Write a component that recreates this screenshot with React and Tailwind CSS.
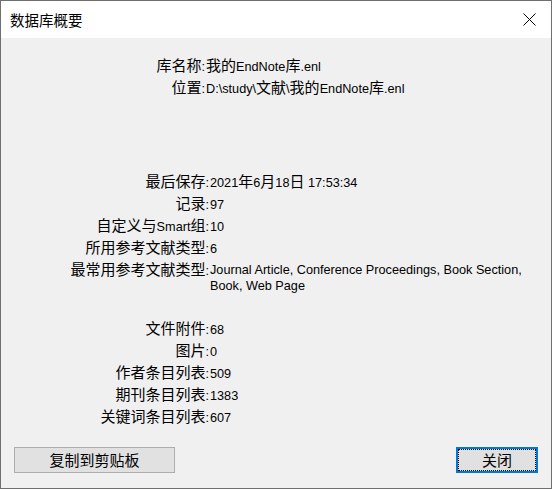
import React from "react";

const CJK = /[\u3000-\u9fff\uff00-\uffef]+|[^\u3000-\u9fff\uff00-\uffef]+/g;
const isCJK = (s) => /[\u3000-\u9fff\uff00-\uffef]/.test(s);

function Mixed({ text }) {
  const runs = text.match(CJK) || [];
  return (
    <>
      {runs.map((r, i) =>
        isCJK(r) ? (
          <span key={i} className="font-['Noto_Sans_CJK_SC',sans-serif] text-[15px]">
            {r}
          </span>
        ) : (
          <span key={i} className="font-['Liberation_Sans',sans-serif] text-[12.7px]">
            {r}
          </span>
        )
      )}
    </>
  );
}

function Row({ label, value, w = "w-[208px]" }) {
  return (
    <div className="flex h-[22px] items-center leading-[22px] text-black">
      <div className={`${w} shrink-0 whitespace-nowrap text-right`}>
        <Mixed text={label} />
      </div>
      <div className="whitespace-nowrap pl-[1px]">
        <Mixed text={value} />
      </div>
    </div>
  );
}

export default function App() {
  return (
    <div className="flex h-[489px] w-[552px] flex-col border border-[#6f6f6f] bg-[#f0f0f0]">
      <div className="flex h-[37px] shrink-0 items-center justify-between bg-white pl-[9px] pr-[15px]">
        <span className="font-['Noto_Sans_CJK_SC',sans-serif] text-[14.5px] text-black">数据库概要</span>
        <svg width="13" height="13" viewBox="0 0 13 13">
          <path d="M0.5 0.5 L12.5 12.5 M12.5 0.5 L0.5 12.5" stroke="#000" strokeWidth="1" />
        </svg>
      </div>
      <div className="flex flex-1 flex-col pt-[17px]">
        <div className="flex flex-col">
          <Row w="w-[204px]" label="库名称:" value="我的EndNote库.enl" />
          <Row w="w-[204px]" label="位置:" value="D:\study\文献\我的EndNote库.enl" />
        </div>
        <div className="mt-[72px] flex flex-col">
          <Row label="最后保存:" value="2021年6月18日 17:53:34" />
          <Row label="记录:" value="97" />
          <Row label="自定义与Smart组:" value="10" />
          <Row label="所用参考文献类型:" value="6" />
          <div className="flex h-[38px] text-black">
            <div className="flex h-[22px] w-[208px] shrink-0 items-center justify-end whitespace-nowrap leading-[22px]">
              <span>
                <Mixed text="最常用参考文献类型:" />
              </span>
            </div>
            <div className="flex flex-col whitespace-nowrap pl-[1px] font-['Liberation_Sans',sans-serif] text-[12.7px]">
              <div className="flex h-[22px] items-center leading-[16px]">
                Journal Article, Conference Proceedings, Book Section,
              </div>
              <div className="-mt-[6px] flex h-[22px] items-center leading-[16px]">Book, Web Page</div>
            </div>
          </div>
        </div>
        <div className="mt-[21px] flex flex-col">
          <Row label="文件附件:" value="68" />
          <Row label="图片:" value="0" />
          <Row label="作者条目列表:" value="509" />
          <Row label="期刊条目列表:" value="1383" />
          <Row label="关键词条目列表:" value="607" />
        </div>
        <div className="mt-[19px] flex items-start justify-between pl-[13px] pr-[13px]">
          <button className="flex h-[26px] w-[161px] items-center justify-center border border-[#adadad] bg-[#e1e1e1] text-black">
            <Mixed text="复制到剪贴板" />
          </button>
          <button className="h-[26px] w-[82px] border-2 border-[#0078d7] bg-[#e1e1e1] p-0 text-black">
            <div className="flex h-full w-full items-center justify-center border border-dotted border-black">
              <Mixed text="关闭" />
            </div>
          </button>
        </div>
      </div>
    </div>
  );
}
